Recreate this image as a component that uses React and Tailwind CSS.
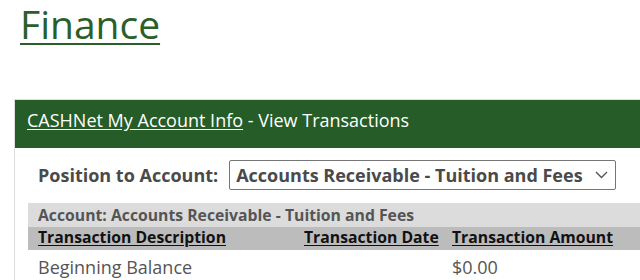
import React from "react";

function App() {
  return (
    <div className="h-[280px] w-[640px] overflow-hidden bg-white font-['Open_Sans',sans-serif]">
      <h1 className="ml-[20px] text-[39px] font-normal leading-[47px] text-[#2b5e2b]">
        <a href="#" className="underline decoration-[2px] underline-offset-[4px]">
          Finance
        </a>
      </h1>

      <div className="ml-[14px] mt-[52px] w-[700px] border-l border-t border-[#dddddd]">
        {/* Panel header */}
        <div className="flex h-[48px] items-start bg-[#265c27] pl-[12px] pt-[8px] text-[18px] leading-[24px] text-white">
          <a href="#" className="underline underline-offset-[2px]">
            CASHNet My Account Info
          </a>
          <span>&nbsp;- View Transactions</span>
        </div>

        <div className="pl-[13px]">
          {/* Account selector */}
          <div className="flex items-center pl-[10px] pt-[12px]">
            <label className="text-[18px] font-bold leading-[24px] text-[#4a4a4a]">
              Position to Account:
            </label>
            <div className="ml-[11px] flex h-[30px] w-[387px] items-center justify-between rounded-[2px] border border-[#767676] pl-[6px] pr-[7px]">
              <span className="text-[18px] font-bold leading-[24px] text-[#4a4a4a]">
                Accounts Receivable - Tuition and Fees
              </span>
              <svg width="13" height="8" viewBox="0 0 13 8" fill="none">
                <path d="M1 1l5.5 5.5L12 1" stroke="#555" strokeWidth="1.4" />
              </svg>
            </div>
          </div>

          {/* Transactions table */}
          <div className="mt-[13px] text-[#555555]">
            <div className="h-[24px] bg-[#dcdcdc] pl-[10px] text-[15.75px] font-bold leading-[24px]">
              Account: Accounts Receivable - Tuition and Fees
            </div>
            <div className="grid h-[23px] grid-cols-[266px_148px_1fr] bg-[#bcbcbc] text-[15.75px] font-bold leading-[21px] text-[#111111]">
              <span className="pl-[10px] underline underline-offset-[2px]">Transaction Description</span>
              <span className="pl-[10px] underline underline-offset-[2px]">Transaction Date</span>
              <span className="pl-[10px] underline underline-offset-[2px]">Transaction Amount</span>
            </div>
            <div className="grid grid-cols-[266px_148px_1fr] pt-[4px] text-[18px] leading-[26px]">
              <span className="pl-[10px]">Beginning Balance</span>
              <span></span>
              <span className="pl-[10px]">$0.00</span>
            </div>
          </div>
        </div>
      </div>
    </div>
  );
}

export default App;
